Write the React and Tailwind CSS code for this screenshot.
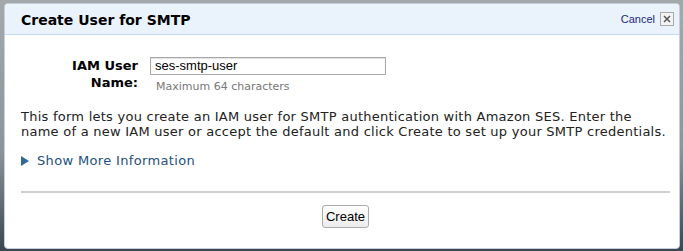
import React from "react";

export default function App() {
  const verdana = { fontFamily: '"DejaVu Sans", Verdana, sans-serif' };
  const arial = { fontFamily: '"Liberation Sans", Arial, sans-serif' };
  return (
    <div className="w-[683px] h-[251px] pt-[3px] pl-[4px] pr-[3px] pb-[2px] bg-[linear-gradient(180deg,#a3a9ab_0%,#8c949a_60%,#3b4652_100%)] overflow-hidden">
      <div className="w-[676px] h-[246px] bg-white rounded-[4px] border border-[#c4cfd9] overflow-hidden flex flex-col">
        <div className="h-[31px] shrink-0 bg-[#eaf2fc] border-b border-[#c3dbf0] flex items-center pl-[16px] pr-[5px]">
          <div className="text-[14px] font-bold text-black leading-none pt-[1px]" style={verdana}>
            Create User for SMTP
          </div>
          <div className="ml-auto flex items-center gap-[5px]">
            <span className="text-[11px] text-[#1b2a7a] leading-none" style={arial}>Cancel</span>
            <span className="w-[14px] h-[14px] border border-[#a9a9a9] bg-[#f3f3f3] flex items-center justify-center">
              <svg width="8" height="8" viewBox="0 0 8 8">
                <path d="M1 1 L7 7 M7 1 L1 7" stroke="#555" strokeWidth="1.5" />
              </svg>
            </span>
          </div>
        </div>
        <div className="pl-[16px] pr-[9px] flex flex-col">
          <div className="flex items-start mt-[22px]">
            <div className="w-[117px] text-right text-[13px] font-bold leading-[17px] text-black" style={verdana}>
              IAM User<br />Name:
            </div>
            <div className="ml-[12px] flex flex-col">
              <div className="w-[236px] h-[18px] border border-[#a8a8a8] shadow-[inset_0_1px_1px_rgba(0,0,0,0.12)] flex items-center pl-[4px] text-[13px] text-black" style={arial}>
                ses-smtp-user
              </div>
              <div className="mt-[5px] pl-[6px] text-[11px] leading-[14px] text-[#777]" style={verdana}>
                Maximum 64 characters
              </div>
            </div>
          </div>
          <p className="mt-[15px] text-[13px] leading-[15px] tracking-[0.25px] text-[#222] whitespace-nowrap" style={verdana}>
            This form lets you create an IAM user for SMTP authentication with Amazon SES. Enter the
            <br />
            name of a new IAM user or accept the default and click Create to set up your SMTP credentials.
          </p>
          <div className="mt-[14px] flex items-center h-[15px]">
            <svg width="8" height="10" viewBox="0 0 8 10">
              <path d="M0 0 L8 5 L0 10 Z" fill="#2f6a99" />
            </svg>
            <span className="ml-[8px] text-[13px] tracking-[0.35px] text-[#1e4f7e]" style={verdana}>
              Show More Information
            </span>
          </div>
          <div className="mt-[23px] h-[2px] bg-[#cfcfcf]" />
          <div className="flex justify-center mt-[12px]">
            <button className="h-[23px] w-[47px] border border-[#ababab] rounded-[3px] bg-[linear-gradient(180deg,#ffffff,#ececec)] text-[13px] text-black" style={arial}>
              Create
            </button>
          </div>
        </div>
      </div>
    </div>
  );
}
